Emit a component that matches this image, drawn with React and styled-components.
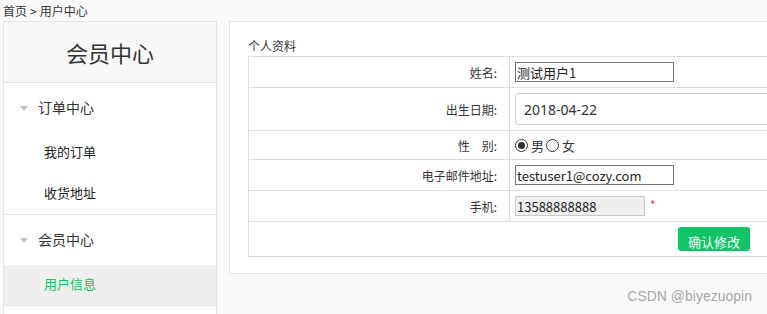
import styled, { createGlobalStyle } from "styled-components";

const GlobalStyle = createGlobalStyle`
	body {
		margin: 0;
		background: #fafafa;
		font-family: "Noto Sans CJK SC", "Noto Sans", sans-serif;
		color: #333;
	}
`;

const Page = styled.div`
	position: relative;
	width: 767px;
	height: 314px;
	overflow: hidden;
	background: #fafafa;
`;

const Crumb = styled.div`
	height: 21px;
	padding-left: 3px;
	font-size: 12px;
	line-height: 21px;
	color: #333;
	& span {
		margin: 0 3px;
	}
`;

const Body = styled.div`
	display: flex;
	align-items: flex-start;
	gap: 12px;
	padding-left: 3px;
`;

const Side = styled.aside`
	width: 212px;
	height: 320px;
	flex-shrink: 0;
	background: #fff;
	border: 1px solid #e4e4e4;
	border-bottom: none;
`;

const SideTitle = styled.div`
	height: 60px;
	background: #f8f8f8;
	border-bottom: 1px solid #e4e4e4;
	display: flex;
	align-items: center;
	justify-content: center;
	font-size: 22px;
	color: #333;
`;

const Group = styled.div`
	border-bottom: 1px solid #e4e4e4;
`;

const GroupHead = styled.div`
	height: 50px;
	box-sizing: border-box;
	padding-bottom: 2px;
	display: flex;
	align-items: center;
	padding-left: 16px;
	gap: 10px;
	font-size: 14px;
	color: #333;
`;

const Caret = styled.i`
	width: 0;
	height: 0;
	border-left: 4px solid transparent;
	border-right: 4px solid transparent;
	border-top: 5px solid #c4c4c4;
	margin-top: 3px;
`;

const SubItem = styled.div`
	height: ${({ $h }) => $h || 40}px;
	box-sizing: border-box;
	padding-bottom: 3px;
	display: flex;
	align-items: center;
	padding-left: 40px;
	font-size: 13px;
	color: ${({ $active }) => ($active ? "#12c464" : "#222")};
	background: ${({ $active }) => ($active ? "#efefef" : "transparent")};
`;

const Main = styled.section`
	width: 600px;
	height: 253px;
	flex-shrink: 0;
	background: #fff;
	border: 1px solid #e4e4e4;
	padding: 14px 0 0 18px;
	box-sizing: border-box;
`;

const Legend = styled.div`
	font-size: 12px;
	line-height: 20px;
	color: #333;
`;

const Table = styled.table`
	width: 560px;
	border-collapse: collapse;
	font-size: 12px;
	& td {
		border: 1px solid #ddd;
		padding: 0;
	}
`;

const Row = styled.tr`
	height: ${({ $h }) => $h}px;
`;

const Label = styled.td`
	width: 248px;
	text-align: right;
	padding-right: 12px !important;
	color: #333;
`;

const Value = styled.td`
	padding-left: 5px !important;
`;

const TextInput = styled.input`
	box-sizing: border-box;
	width: ${({ $w }) => $w || 159}px;
	height: 20px;
	border: 1px solid ${({ $disabled }) => ($disabled ? "#c8c8c8" : "#767676")};
	background: ${({ $disabled }) => ($disabled ? "#efefef" : "#fff")};
	padding: 0 1px;
	font-family: "Noto Sans CJK SC", "Noto Sans", sans-serif;
	font-size: 13px;
	color: #222;
	outline: none;
	vertical-align: middle;
`;

const DateBox = styled.div`
	box-sizing: border-box;
	height: 32px;
	border: 1px solid #ccc;
	border-radius: 3px;
	padding-left: 8px;
	display: flex;
	align-items: center;
	font-family: "Noto Sans", sans-serif;
	font-size: 14px;
	color: #333;
`;

const Radios = styled.label`
	display: flex;
	align-items: center;
	font-size: 13px;
	color: #333;
	& span {
		margin: 0 2px 0 3px;
	}
`;

const Radio = styled.i`
	box-sizing: border-box;
	width: 13px;
	height: 13px;
	border-radius: 50%;
	border: 1px solid #333;
	display: inline-flex;
	align-items: center;
	justify-content: center;
	&::after {
		content: "";
		width: 7px;
		height: 7px;
		border-radius: 50%;
		background: ${({ $checked }) => ($checked ? "#333" : "transparent")};
	}
`;

const Star = styled.span`
	color: #f33;
	margin-left: 5px;
	font-size: 12px;
`;

const ActionCell = styled.td`
	text-align: right;
	padding-right: 57px !important;
	vertical-align: top;
	padding-top: 5px !important;
`;

const SaveButton = styled.button`
	width: 72px;
	height: 24px;
	border: none;
	border-radius: 3px;
	background: #0fc566;
	color: #fff;
	font-family: "Noto Sans CJK SC", sans-serif;
	font-size: 13px;
	padding: 5px 0 0;
	line-height: 18px;
`;

const Mark = styled.div`
	position: absolute;
	right: 15px;
	bottom: 10px;
	font-family: "Liberation Sans", Arial, sans-serif;
	font-size: 14px;
	color: #a6a6a6;
`;

export default function App() {
	return (
		<>
			<GlobalStyle />
			<Page>
				<Crumb>
					首页<span>&gt;</span>用户中心
				</Crumb>
				<Body>
					<Side>
						<SideTitle>会员中心</SideTitle>
						<Group>
							<GroupHead>
								<Caret />
								订单中心
							</GroupHead>
							<SubItem>我的订单</SubItem>
							<SubItem $h={41}>收货地址</SubItem>
						</Group>
						<Group>
							<GroupHead>
								<Caret />
								会员中心
							</GroupHead>
							<SubItem $active>用户信息</SubItem>
						</Group>
					</Side>
					<Main>
						<Legend>个人资料</Legend>
						<Table>
							<tbody>
								<Row $h={31}>
									<Label>姓名:</Label>
									<Value>
										<TextInput defaultValue="测试用户1" />
									</Value>
								</Row>
								<Row $h={43}>
									<Label>出生日期:</Label>
									<Value>
										<DateBox>2018-04-22</DateBox>
									</Value>
								</Row>
								<Row $h={29}>
									<Label>性　别:</Label>
									<Value>
										<Radios>
											<Radio $checked />
											<span>男</span>
											<Radio />
											<span>女</span>
										</Radios>
									</Value>
								</Row>
								<Row $h={31}>
									<Label>电子邮件地址:</Label>
									<Value>
										<TextInput defaultValue="testuser1@cozy.com" />
									</Value>
								</Row>
								<Row $h={31}>
									<Label>手机:</Label>
									<Value>
										<TextInput $w={130} $disabled readOnly defaultValue="13588888888" />
										<Star>*</Star>
									</Value>
								</Row>
								<Row $h={35}>
									<ActionCell colSpan={2}>
										<SaveButton>确认修改</SaveButton>
									</ActionCell>
								</Row>
							</tbody>
						</Table>
					</Main>
				</Body>
				<Mark>CSDN @biyezuopin</Mark>
			</Page>
		</>
	);
}
